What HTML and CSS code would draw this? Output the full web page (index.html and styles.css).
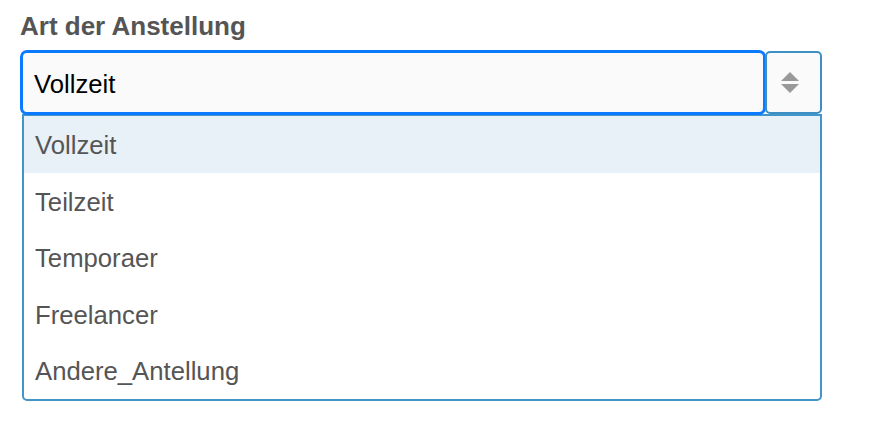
FILE: index.html
```html
<!DOCTYPE html>
<html lang="de">
<head>
    <meta charset="UTF-8">
    <meta name="viewport" content="width=device-width, initial-scale=1.0">
    <title>Art der Anstellung</title>
    <link rel="stylesheet" href="styles.css">
</head>
<body>
    <div class="field">
        <label class="field-label" for="employment">Art der Anstellung</label>

        <div class="select-row">
            <div class="select-value" id="employment" tabindex="0">Vollzeit</div>
            <div class="select-toggle">
                <svg width="18" height="21" viewBox="0 0 18 21">
                    <path d="M0 9 L9 0 L18 9 Z" fill="#999"/>
                    <path d="M0 12 L18 12 L9 21 Z" fill="#999"/>
                </svg>
            </div>
        </div>

        <ul class="select-options">
            <li class="option is-active">Vollzeit</li>
            <li class="option">Teilzeit</li>
            <li class="option">Temporaer</li>
            <li class="option">Freelancer</li>
            <li class="option">Andere_Antellung</li>
        </ul>
    </div>
</body>
</html>
```

FILE: styles.css
```css
* {
    margin: 0;
    padding: 0;
    box-sizing: border-box;
    font-family: Helvetica, "Liberation Sans", Arial, sans-serif;
}

body {
    background: #fff;
}

.field {
    padding: 11px 0 0 20px;
}

.field-label {
    display: block;
    font-size: 26px;
    line-height: 30px;
    font-weight: bold;
    color: #555;
    margin-bottom: 9px;
}

.select-row {
    display: flex;
    width: 802px;
}

.select-value {
    width: 746px;
    height: 65px;
    padding: 3px 11px 0;
    display: flex;
    align-items: center;
    background: #fafafa;
    border: 3px solid #0a7bff;
    border-radius: 7px;
    font-size: 25.7px;
    color: #000;
    outline: none;
}

.select-toggle {
    width: 57px;
    height: 63px;
    margin: 1px 0 0 -1px;
    padding-right: 7px;
    display: flex;
    align-items: center;
    justify-content: center;
    background: #fafafa;
    border: 2px solid #3d8fc4;
    border-radius: 5px;
}

.select-options {
    list-style: none;
    width: 800px;
    margin: -1px 0 0 2px;
    border: 2px solid #4295c8;
    border-radius: 0 0 5px 5px;
}

.option {
    height: 56.6px;
    line-height: 56.6px;
    padding: 1px 11px 0;
    font-size: 25.7px;
    color: #555;
}

.option.is-active {
    background: #e8f0f8;
}
```
